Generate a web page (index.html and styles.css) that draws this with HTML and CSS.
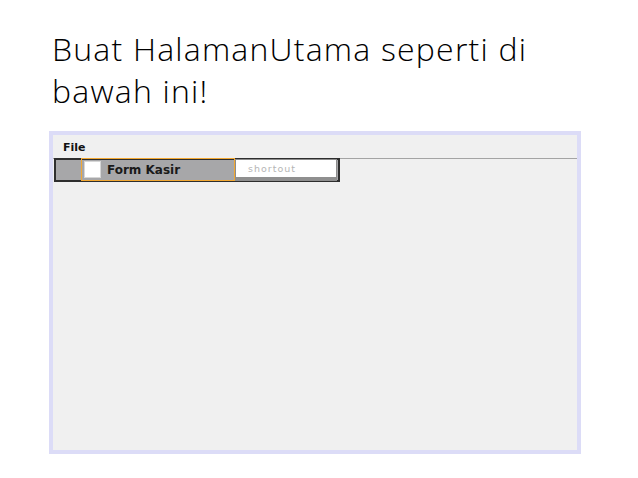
FILE: index.html
```html
<!DOCTYPE html>
<html>
<head>
<meta charset="utf-8">
<link rel="stylesheet" href="styles.css">
</head>
<body>
<h1 class="title">Buat HalamanUtama seperti di<br>bawah ini!</h1>
<div class="panel">
  <div class="menubar"><span class="menu-file">File</span></div>
  <div class="dropdown">
    <div class="dd-gutter"></div>
    <div class="dd-item">
      <span class="check"></span>
      <span class="dd-label">Form Kasir</span>
    </div>
    <div class="shortcut"><span class="shortcut-text">shortout</span></div>
  </div>
</div>
</body>
</html>
```
FILE: styles.css
```css
html, body {
  margin: 0;
  padding: 0;
  background: #ffffff;
}
body {
  width: 638px;
  height: 478px;
  overflow: hidden;
}
.title {
  margin: 0;
  padding: 28px 0 0 52px;
  font-family: "Open Sans", "Liberation Sans", sans-serif;
  font-weight: 300;
  font-size: 32px;
  line-height: 42px;
  color: #000000;
  letter-spacing: 1.2px;
  height: 84px;
  box-sizing: content-box;
  white-space: nowrap;
}
.panel {
  position: relative;
  margin: 19px 0 0 49px;
  width: 524px;
  height: 315px;
  border: 4px solid #dcdcf7;
  background: #f0f0f0;
}
.menubar {
  height: 23px;
  border-bottom: 1px solid #a4a4a4;
  display: flex;
  align-items: center;
  padding-left: 10px;
}
.menu-file {
  font-family: "DejaVu Sans", sans-serif;
  font-weight: bold;
  font-size: 11px;
  color: #111111;
  padding-top: 2px;
}
.dropdown {
  position: absolute;
  left: 1px;
  top: 23px;
  width: 282px;
  height: 20px;
  border: 2px solid #2e2e2e;
  background: #a7a7a9;
  display: flex;
}
.dd-gutter {
  width: 25px;
  flex: none;
}
.dd-item {
  width: 152px;
  height: 21px;
  margin-top: -2px;
  border: 1px solid #f2a833;
  display: flex;
  align-items: center;
  flex: none;
}
.check {
  width: 17px;
  height: 17px;
  margin-left: 2px;
  background: #ffffff;
  border: 1px solid #d6d6d6;
  box-sizing: border-box;
}
.dd-label {
  margin-left: 6px;
  font-family: "DejaVu Sans", sans-serif;
  font-weight: bold;
  font-size: 12px;
  color: #1a1a1a;
}
.shortcut {
  flex: 1;
  margin: -1px 1px 0 0;
  background: #ffffff;
  border: 1px solid #8c8c8c;
  border-bottom: 4px solid #8f8f8f;
  box-sizing: border-box;
  height: 22px;
  display: flex;
  align-items: center;
  padding-left: 12px;
}
.shortcut-text {
  font-family: "DejaVu Sans", sans-serif;
  font-size: 9.5px;
  color: #b5b5b5;
  letter-spacing: 1px;
}
```
